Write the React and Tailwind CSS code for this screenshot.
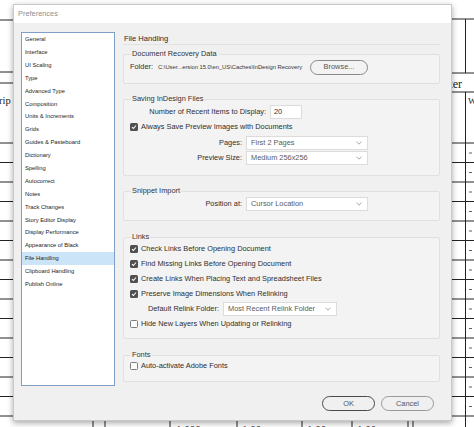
import React from "react";

const items = [
  "General",
  "Interface",
  "UI Scaling",
  "Type",
  "Advanced Type",
  "Composition",
  "Units & Increments",
  "Grids",
  "Guides & Pasteboard",
  "Dictionary",
  "Spelling",
  "Autocorrect",
  "Notes",
  "Track Changes",
  "Story Editor Display",
  "Display Performance",
  "Appearance of Black",
  "File Handling",
  "Clipboard Handling",
  "Publish Online",
];

function Check({ checked }) {
  return checked ? (
    <span className="flex h-[8px] w-[8px] shrink-0 items-center justify-center rounded-[1.5px] bg-[#505050]">
      <svg width="6" height="6" viewBox="0 0 6 6">
        <path d="M1 3.1 L2.4 4.5 L5 1.5" fill="none" stroke="#fff" strokeWidth="1.1" />
      </svg>
    </span>
  ) : (
    <span className="h-[8px] w-[8px] shrink-0 rounded-[1.5px] border border-[#7d7d7d] bg-[#fbfbfb]" />
  );
}

function Chevron() {
  return (
    <svg className="shrink-0" width="6" height="4" viewBox="0 0 6 4">
      <polyline points="0.5,0.6 3,3.2 5.5,0.6" fill="none" stroke="#a0a0a0" strokeWidth="0.9" />
    </svg>
  );
}

function Select({ value, className }) {
  return (
    <div
      className={
        "flex h-[14px] items-center justify-between overflow-hidden whitespace-nowrap border border-[#dcdcdc] bg-white pl-[4px] pr-[5px] text-[#5a5a5a] " +
        className
      }
    >
      <span className="whitespace-nowrap">{value}</span>
      <Chevron />
    </div>
  );
}

function CheckRow({ checked, label, className = "" }) {
  return (
    <div className={"flex h-[14px] items-center gap-[3px] whitespace-nowrap pl-[6px] " + className}>
      <Check checked={checked} />
      <span>{label}</span>
    </div>
  );
}

function Group({ title, className = "", children }) {
  return (
    <fieldset className={"rounded-[2px] border border-[#e0e0e0] bg-[#f3f3f3] " + className}>
      <legend className="ml-[7px] whitespace-nowrap px-[1px] text-[7.4px] leading-[10px] text-[#333]">{title}</legend>
      {children}
    </fieldset>
  );
}

function Background() {
  const rows = [];
  for (let y = 143; y <= 428; y += 19.5) rows.push(y);
  return (
    <svg className="absolute left-0 top-0" width="474" height="427" viewBox="0 0 474 427">
      <line x1="0" y1="20" x2="14" y2="20" stroke="#222" strokeWidth="1" />
      <line x1="0" y1="72" x2="14" y2="72" stroke="#222" strokeWidth="1" />
      <line x1="0" y1="83" x2="14" y2="83" stroke="#222" strokeWidth="1" />
      <text x="-1" y="104" fontFamily="Liberation Serif, serif" fontSize="10.5" fill="#222">rip</text>
      {rows.map((y) => (
        <line key={"l" + y} x1="0" y1={y} x2="14" y2={y} stroke="#222" strokeWidth="1" />
      ))}
      <line x1="450" y1="19" x2="474" y2="19" stroke="#222" strokeWidth="1" />
      <line x1="450" y1="73" x2="474" y2="73" stroke="#222" strokeWidth="1" />
      <line x1="450" y1="92" x2="474" y2="92" stroke="#222" strokeWidth="1" />
      <line x1="465.5" y1="19" x2="465.5" y2="73" stroke="#222" strokeWidth="1" />
      <line x1="465.5" y1="92" x2="465.5" y2="427" stroke="#222" strokeWidth="1" />
      <text x="444" y="88" fontFamily="Liberation Serif, serif" fontSize="12" fill="#222">eter</text>
      <text x="468" y="104" fontFamily="Liberation Serif, serif" fontSize="9" fill="#222">W</text>
      {rows.map((y) => (
        <line key={"r" + y} x1="450" y1={y} x2="474" y2={y} stroke="#222" strokeWidth="1" />
      ))}
      {rows.slice(0, -1).map((y) => (
        <line key={"d" + y} x1="469" y1={y + 10} x2="472" y2={y + 10} stroke="#333" strokeWidth="0.8" />
      ))}
      {[93, 105, 170, 237, 302, 352, 408, 413].map((x) => (
        <line key={"b" + x} x1={x} y1="419" x2={x} y2="427" stroke="#222" strokeWidth="1" />
      ))}
      <text x="176" y="433" fontFamily="Liberation Serif, serif" fontSize="11" fill="#222">1.000</text>
      <text x="242" y="433" fontFamily="Liberation Serif, serif" fontSize="11" fill="#222">1.00</text>
      <text x="307" y="433" fontFamily="Liberation Serif, serif" fontSize="11" fill="#222">1.00</text>
      <text x="357" y="433" fontFamily="Liberation Serif, serif" fontSize="11" fill="#222">1.00</text>
    </svg>
  );
}

export default function App() {
  return (
    <div className="relative h-[427px] w-[474px] overflow-hidden bg-white font-['Liberation_Sans',Arial,sans-serif] text-[7.4px] text-[#2e2e2e]">
      <Background />
      <div className="absolute left-[13px] top-[4px] flex h-[417px] w-[439px] flex-col border border-[#c9c9c9] shadow-[0_2px_6px_rgba(0,0,0,0.35)]">
        <div className="flex h-[18px] items-center bg-white pl-[4px] text-[7.4px] text-[#8e8e8e]">Preferences</div>
        <div className="flex flex-1 bg-[#f0f0f0] pl-[7px] pr-[11px] pt-[9px]">
          <div className="h-[354px] w-[94px] shrink-0 border border-[#7f9fc9] bg-white">
            {items.map((it) => (
              <div
                key={it}
                className={
                  "flex h-[12.9px] items-center whitespace-nowrap pl-[3px] text-[5.8px] text-[#1c1c1c] " +
                  (it === "File Handling" ? "bg-[#cce4f7]" : "")
                }
              >
                {it}
              </div>
            ))}
          </div>
          <div className="ml-[8px] flex flex-1 flex-col pt-[2px]">
            <div className="h-[11px] border-b border-[#e2e2e2] pl-[1px] text-[7.6px] leading-[10px] text-[#2a2a2a]">
              File Handling
            </div>

            <Group title="Document Recovery Data" className="mt-[4px] pb-[8px]">
              <div className="flex h-[16px] items-center whitespace-nowrap pl-[6px]">
                <span className="w-[28px]">Folder:</span>
                <span className="w-[152px] text-[5.8px] text-[#333]">
                  C:\User...ersion 15.0\en_US\Caches\InDesign Recovery
                </span>
                <div className="flex h-[15px] w-[58px] items-center justify-center rounded-full border border-[#8a8a8a] text-[#555]">
                  Browse...
                </div>
              </div>
            </Group>

            <Group title="Saving InDesign Files" className="mt-[10px] pb-[10px]">
              <div className="mt-[1px] flex h-[14px] items-center whitespace-nowrap">
                <span className="w-[142px] text-right">Number of Recent Items to Display:</span>
                <div className="ml-[4px] flex h-[14px] w-[32px] items-center border border-[#dcdcdc] bg-white pl-[3px] text-[#333]">
                  20
                </div>
              </div>
              <CheckRow checked label="Always Save Preview Images with Documents" className="mt-[1px]" />
              <div className="mt-[2px] flex h-[14px] items-center whitespace-nowrap">
                <span className="w-[118px] text-right">Pages:</span>
                <Select value="First 2 Pages" className="ml-[4px] w-[122px]" />
              </div>
              <div className="mt-[1px] flex h-[14px] items-center whitespace-nowrap">
                <span className="w-[118px] text-right">Preview Size:</span>
                <Select value="Medium 256x256" className="ml-[4px] w-[122px]" />
              </div>
            </Group>

            <Group title="Snippet Import" className="mt-[10px] pb-[9px]">
              <div className="mt-[1px] flex h-[14px] items-center whitespace-nowrap">
                <span className="w-[118px] text-right">Position at:</span>
                <Select value="Cursor Location" className="ml-[4px] w-[122px]" />
              </div>
            </Group>

            <Group title="Links" className="mt-[11px] pb-[7px]">
              <CheckRow checked label="Check Links Before Opening Document" />
              <CheckRow checked label="Find Missing Links Before Opening Document" className="mt-[1px]" />
              <CheckRow checked label="Create Links When Placing Text and Spreadsheet Files" className="mt-[1px]" />
              <CheckRow checked label="Preserve Image Dimensions When Relinking" className="mt-[1px]" />
              <div className="mt-[1px] flex h-[14px] items-center whitespace-nowrap">
                <span className="w-[95px] text-right">Default Relink Folder:</span>
                <Select value="Most Recent Relink Folder" className="ml-[4px] w-[114px]" />
              </div>
              <CheckRow checked={false} label="Hide New Layers When Updating or Relinking" className="mt-[1px]" />
            </Group>

            <Group title="Fonts" className="mt-[11px] pb-[9px]">
              <div className="flex h-[12px] items-center gap-[3px] whitespace-nowrap pl-[6px]">
                <Check checked={false} />
                <span>Auto-activate Adobe Fonts</span>
              </div>
            </Group>

            <div className="mt-[14px] flex justify-end gap-[6px] pr-[6px]">
              <div className="flex h-[15px] w-[53px] items-center justify-center rounded-full border-[1.5px] border-[#4a4a4a] text-[#555]">
                OK
              </div>
              <div className="flex h-[15px] w-[53px] items-center justify-center rounded-full border border-[#9a9a9a] text-[#555]">
                Cancel
              </div>
            </div>
          </div>
        </div>
      </div>
    </div>
  );
}
